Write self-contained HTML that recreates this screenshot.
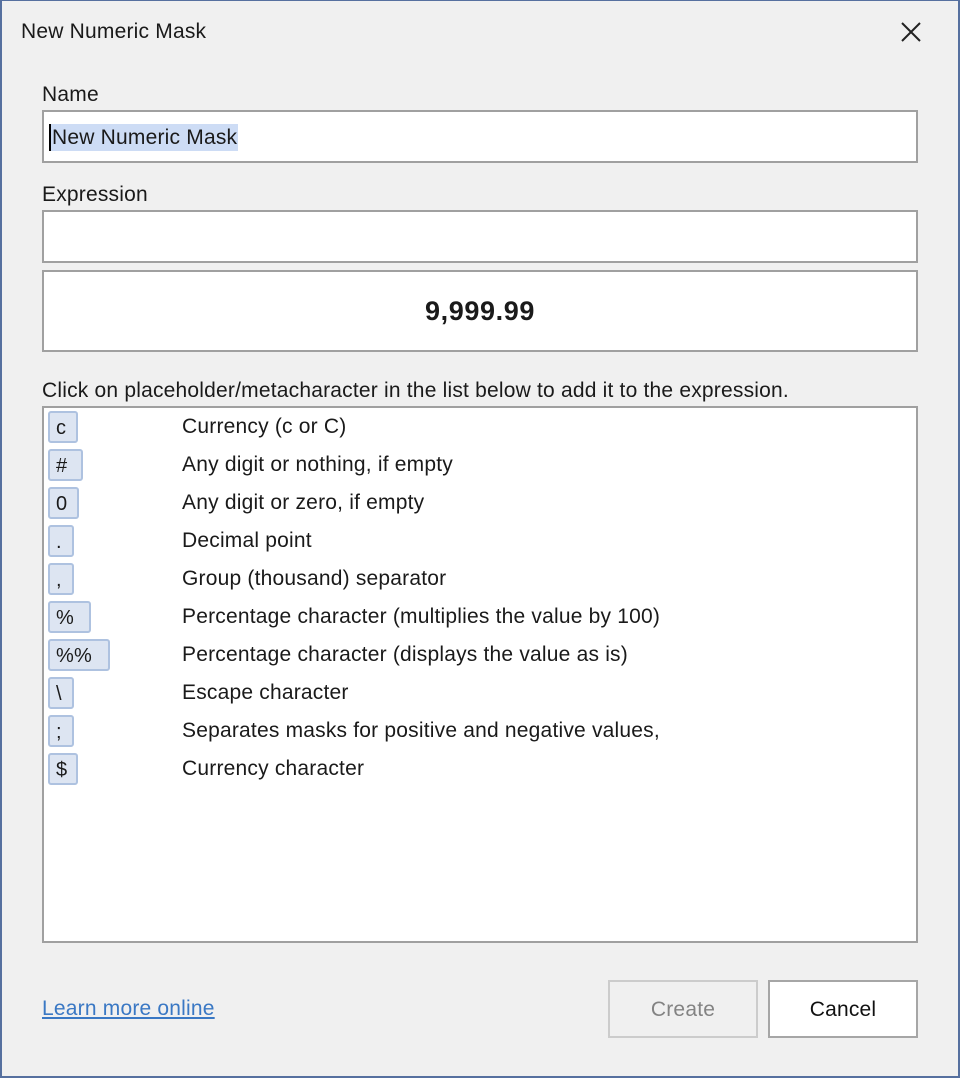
<!DOCTYPE html>
<html><head><meta charset="utf-8"><style>
*{margin:0;padding:0;box-sizing:border-box}
body{width:960px;height:1078px;background:#f0f0f0;font-family:"Liberation Sans",sans-serif;color:#1a1a1a;font-size:21px;letter-spacing:0.2px;position:relative;overflow:hidden}
.frame{position:absolute;left:0;top:0;width:960px;height:1078px;border:2px solid #56709f;border-top-width:1px}
.a{position:absolute;white-space:nowrap}
.box{position:absolute;left:42px;width:876px;background:#fff;border:2px solid #a0a0a0}
.b{position:absolute;left:48px;height:32px;background:#dde5f2;border:2px solid #aec2e0;border-radius:3px;padding:0 0 0 6px;line-height:30px;font-size:20px}
.d{position:absolute;left:182px;line-height:32px}
.btn{position:absolute;top:980px;width:150px;height:58px;border:2px solid;text-align:center;line-height:56px;font-size:21px}
</style></head><body>
<div class="frame"></div>
<div class="a" style="left:21px;top:20px">New Numeric Mask</div>
<svg class="a" style="left:901px;top:22px" width="20" height="20"><path d="M1 1L19 19M19 1L1 19" stroke="#222" stroke-width="2"/></svg>
<div class="a" style="left:42px;top:83px">Name</div>
<div class="box" style="top:110px;height:53px"><span class="a" style="left:5px;top:12px;background:#cddcf5;padding:0 1px;border-left:2px solid #000;line-height:27px">New Numeric Mask</span></div>
<div class="a" style="left:42px;top:183px">Expression</div>
<div class="box" style="top:210px;height:53px"></div>
<div class="box" style="top:270px;height:82px;text-align:center;line-height:78px;font-weight:bold;font-size:27px;letter-spacing:0.6px">9,999.99</div>
<div class="a" style="left:42px;top:379px">Click on placeholder/metacharacter in the list below to add it to the expression.</div>
<div class="box" style="top:406px;height:537px"></div>
<div class="b" style="top:411px;width:30px">c</div><div class="d" style="top:411px">Currency (c or C)</div>
<div class="b" style="top:449px;width:35px">#</div><div class="d" style="top:449px">Any digit or nothing, if empty</div>
<div class="b" style="top:487px;width:31px">0</div><div class="d" style="top:487px">Any digit or zero, if empty</div>
<div class="b" style="top:525px;width:26px">.</div><div class="d" style="top:525px">Decimal point</div>
<div class="b" style="top:563px;width:26px">,</div><div class="d" style="top:563px">Group (thousand) separator</div>
<div class="b" style="top:601px;width:43px">%</div><div class="d" style="top:601px">Percentage character (multiplies the value by 100)</div>
<div class="b" style="top:639px;width:62px">%%</div><div class="d" style="top:639px">Percentage character (displays the value as is)</div>
<div class="b" style="top:677px;width:26px">\</div><div class="d" style="top:677px">Escape character</div>
<div class="b" style="top:715px;width:26px">;</div><div class="d" style="top:715px">Separates masks for positive and negative values,</div>
<div class="b" style="top:753px;width:30px">$</div><div class="d" style="top:753px">Currency character</div>
<div class="a" style="left:42px;top:997px;color:#3a78c4;text-decoration:underline">Learn more online</div>
<div class="btn" style="left:608px;border-color:#cccccc;color:#838383;background:#f0f0f0">Create</div>
<div class="btn" style="left:768px;border-color:#a6a6a6;background:#fff;color:#111">Cancel</div>
</body></html>
